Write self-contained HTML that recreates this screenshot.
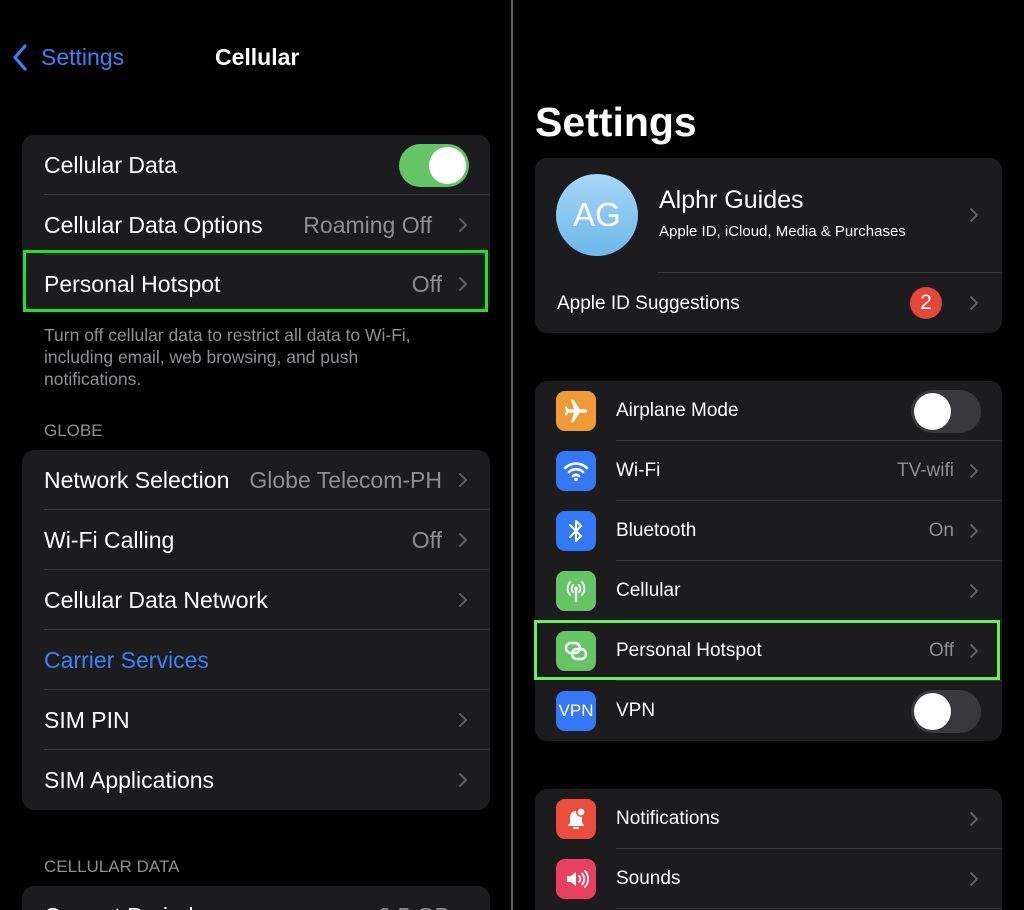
<!DOCTYPE html>
<html><head><meta charset="utf-8"><style>
*{margin:0;padding:0;box-sizing:border-box}
html,body{width:1024px;height:910px;overflow:hidden}
body{background:#000;font-family:"Liberation Sans",sans-serif;color:#fff;position:relative}
.a{position:absolute}
.card{position:absolute;background:#1c1c1e;border-radius:12px;overflow:hidden}
.row{position:absolute;left:0;right:0;height:60px;display:flex;align-items:center}
.sep{position:absolute;height:1px;background:#38383a;right:0}
.val{color:#8e8e93}
.chev{position:absolute;width:10px;height:16px}
.hl{position:absolute;border:3px solid #22e12a}
.hl2{position:absolute;border:3px solid #6cf05a}
.tog{position:absolute;width:70px;height:43px;border-radius:22px;background:#39393d}
.tog i{position:absolute;top:3px;width:37px;height:37px;border-radius:50%;background:#fff}
.ic{position:absolute;left:21px;width:40px;height:40px;border-radius:9px;display:flex;align-items:center;justify-content:center}
.L{font-size:23px}
.R{font-size:19px}
</style></head><body>
<svg width="0" height="0" style="position:absolute"><defs><symbol id="cv" viewBox="0 0 10 16"><polyline points="2,2 8,8 2,14" fill="none" stroke="#5f5f64" stroke-width="2" stroke-linecap="round" stroke-linejoin="round"/></symbol></defs></svg>

<div class="a" style="left:511px;top:0;width:2px;height:910px;background:#5a5a5a"></div>

<!-- LEFT -->
<svg class="a" style="left:12px;top:44px" width="16" height="27" viewBox="0 0 16 27"><polyline points="13,2 3,13.5 13,25" fill="none" stroke="#3a82f7" stroke-width="3.2" stroke-linecap="round" stroke-linejoin="round"/></svg>
<div class="a" style="left:41px;top:44px;font-size:23px;color:#3a82f7">Settings</div>
<div class="a" style="left:215px;top:44px;font-size:23px;font-weight:bold">Cellular</div>

<div class="card" style="left:22px;top:135px;width:468px;height:178px">
  <div class="row L" style="top:0"><span style="margin-left:22px">Cellular Data</span></div>
  <div class="tog" style="left:377px;top:9px;background:#65c466"><i style="left:30px"></i></div>
  <div class="sep" style="left:22px;top:59px"></div>
  <div class="row L" style="top:60px"><span style="margin-left:22px">Cellular Data Options</span><span class="val" style="position:absolute;right:58px">Roaming Off</span></div>
  <svg class="chev" style="left:436px;top:82px"><use href="#cv"/></svg>
  <div class="sep" style="left:22px;top:119px"></div>
  <div class="row L" style="top:119px"><span style="margin-left:22px">Personal Hotspot</span><span class="val" style="position:absolute;right:48px">Off</span></div>
  <svg class="chev" style="left:436px;top:141px"><use href="#cv"/></svg>
</div>
<div class="hl" style="left:23px;top:250px;width:465px;height:62px"></div>

<div class="a" style="left:44px;top:324px;font-size:17.5px;line-height:22px;color:#8e8e93;width:410px">Turn off cellular data to restrict all data to Wi-Fi, including email, web browsing, and push notifications.</div>
<div class="a" style="left:44px;top:421px;font-size:17px;color:#8e8e93">GLOBE</div>

<div class="card" style="left:22px;top:450px;width:468px;height:360px">
  <div class="row L" style="top:0"><span style="margin-left:22px">Network Selection</span><span class="val" style="position:absolute;right:48px">Globe Telecom-PH</span></div>
  <svg class="chev" style="left:436px;top:22px"><use href="#cv"/></svg>
  <div class="sep" style="left:22px;top:59px"></div>
  <div class="row L" style="top:60px"><span style="margin-left:22px">Wi-Fi Calling</span><span class="val" style="position:absolute;right:48px">Off</span></div>
  <svg class="chev" style="left:436px;top:82px"><use href="#cv"/></svg>
  <div class="sep" style="left:22px;top:119px"></div>
  <div class="row L" style="top:120px"><span style="margin-left:22px">Cellular Data Network</span></div>
  <svg class="chev" style="left:436px;top:142px"><use href="#cv"/></svg>
  <div class="sep" style="left:22px;top:179px"></div>
  <div class="row L" style="top:180px"><span style="margin-left:22px;color:#3a82f7">Carrier Services</span></div>
  <div class="sep" style="left:22px;top:239px"></div>
  <div class="row L" style="top:240px"><span style="margin-left:22px">SIM PIN</span></div>
  <svg class="chev" style="left:436px;top:262px"><use href="#cv"/></svg>
  <div class="sep" style="left:22px;top:299px"></div>
  <div class="row L" style="top:300px"><span style="margin-left:22px">SIM Applications</span></div>
  <svg class="chev" style="left:436px;top:322px"><use href="#cv"/></svg>
</div>

<div class="a" style="left:44px;top:857px;font-size:17px;color:#8e8e93">CELLULAR DATA</div>
<div class="card" style="left:22px;top:886px;width:468px;height:60px">
  <div class="row L" style="top:0"><span style="margin-left:22px">Current Period</span><span class="val" style="position:absolute;right:40px">2.5 GB</span></div>
</div>

<!-- RIGHT -->
<div class="a" style="left:535px;top:99px;font-size:41px;font-weight:bold">Settings</div>

<div class="card" style="left:535px;top:158px;width:467px;height:175px">
  <div class="a" style="left:21px;top:16px;width:82px;height:82px;border-radius:50%;background:linear-gradient(#a6d6f5,#6db8ea);display:flex;align-items:center;justify-content:center;font-size:33px">AG</div>
  <div class="a" style="left:124px;top:28px;font-size:25px">Alphr Guides</div>
  <div class="a" style="left:124px;top:65px;font-size:15px">Apple ID, iCloud, Media &amp; Purchases</div>
  <svg class="chev" style="left:434px;top:49px"><use href="#cv"/></svg>
  <div class="sep" style="left:122px;top:114px"></div>
  <div class="a R" style="left:22px;top:135px">Apple ID Suggestions</div>
  <div class="a" style="left:375px;top:129px;width:32px;height:32px;border-radius:50%;background:#e5453a;display:flex;align-items:center;justify-content:center;font-size:21px">2</div>
  <svg class="chev" style="left:434px;top:137px"><use href="#cv"/></svg>
</div>

<div class="card" style="left:535px;top:381px;width:467px;height:360px">
  <div class="ic" style="top:10px;background:#f09a37"><svg width="30" height="30" viewBox="0 0 24 24"><path d="M21 12c0-.8-.7-1.3-1.5-1.3H15L10 3H8l2.5 7.7H6L4.3 8.5H3l1 3.5-1 3.5h1.3L6 13.3h4.5L8 21h2l5-7.7h4.5c.8 0 1.5-.5 1.5-1.3z" fill="#fff"/></svg></div>
  <div class="row R" style="top:0"><span style="margin-left:81px">Airplane Mode</span></div>
  <div class="tog" style="left:376px;top:9px"><i style="left:3px"></i></div>
  <div class="sep" style="left:81px;top:59px"></div>

  <div class="ic" style="top:70px;background:#3478f6"><svg width="28" height="24" viewBox="0 0 28 24"><path d="M3 9a16 16 0 0 1 22 0M7 13a10 10 0 0 1 14 0M11 17a4.5 4.5 0 0 1 6 0" fill="none" stroke="#fff" stroke-width="2.6" stroke-linecap="round"/><circle cx="14" cy="20.5" r="1.8" fill="#fff"/></svg></div>
  <div class="row R" style="top:60px"><span style="margin-left:81px">Wi-Fi</span><span class="val" style="position:absolute;right:48px">TV-wifi</span></div>
  <svg class="chev" style="left:434px;top:82px"><use href="#cv"/></svg>
  <div class="sep" style="left:81px;top:119px"></div>

  <div class="ic" style="top:130px;background:#3478f6"><svg width="20" height="28" viewBox="0 0 20 28"><polyline points="4,8 15,19 10,24 10,4 15,9 4,20" fill="none" stroke="#fff" stroke-width="2" stroke-linejoin="round" stroke-linecap="round"/></svg></div>
  <div class="row R" style="top:120px"><span style="margin-left:81px">Bluetooth</span><span class="val" style="position:absolute;right:48px">On</span></div>
  <svg class="chev" style="left:434px;top:142px"><use href="#cv"/></svg>
  <div class="sep" style="left:81px;top:179px"></div>

  <div class="ic" style="top:190px;background:#65c466"><svg width="30" height="30" viewBox="0 0 30 30"><path d="M9 6a10 10 0 0 0 0 13M21 6a10 10 0 0 1 0 13M12 9a5 5 0 0 0 0 7M18 9a5 5 0 0 1 0 7" fill="none" stroke="#fff" stroke-width="1.8" stroke-linecap="round"/><circle cx="15" cy="12.5" r="2" fill="#fff"/><line x1="15" y1="13" x2="15" y2="25" stroke="#fff" stroke-width="2.2" stroke-linecap="round"/></svg></div>
  <div class="row R" style="top:180px"><span style="margin-left:81px">Cellular</span></div>
  <svg class="chev" style="left:434px;top:202px"><use href="#cv"/></svg>
  <div class="sep" style="left:81px;top:239px"></div>

  <div class="ic" style="top:250px;background:#65c466"><svg width="28" height="28" viewBox="0 0 28 28"><rect x="4" y="6" width="14" height="10" rx="5" fill="none" stroke="#fff" stroke-width="2.4"/><rect x="10" y="12" width="14" height="10" rx="5" fill="none" stroke="#fff" stroke-width="2.4"/></svg></div>
  <div class="row R" style="top:240px"><span style="margin-left:81px">Personal Hotspot</span><span class="val" style="position:absolute;right:48px">Off</span></div>
  <svg class="chev" style="left:434px;top:262px"><use href="#cv"/></svg>
  <div class="sep" style="left:81px;top:299px"></div>

  <div class="ic" style="top:310px;background:#3478f6;font-size:17px">VPN</div>
  <div class="row R" style="top:300px"><span style="margin-left:81px">VPN</span></div>
  <div class="tog" style="left:376px;top:309px"><i style="left:3px"></i></div>
</div>
<div class="hl2" style="left:534px;top:620px;width:466px;height:60px"></div>

<div class="card" style="left:535px;top:789px;width:467px;height:160px">
  <div class="ic" style="top:10px;background:#eb4d3d"><svg width="28" height="28" viewBox="0 0 28 28"><path d="M14 6c-4 0-6 3-6 7v5l-2 2v1h16v-1l-2-2v-5c0-4-2-7-6-7z" fill="#fff"/><rect x="11" y="22" width="6" height="2" rx="1" fill="#fff"/><circle cx="19" cy="7" r="4.2" fill="#fff" stroke="#eb4d3d" stroke-width="1.6"/></svg></div>
  <div class="row R" style="top:0"><span style="margin-left:81px">Notifications</span></div>
  <svg class="chev" style="left:434px;top:22px"><use href="#cv"/></svg>
  <div class="sep" style="left:81px;top:59px"></div>
  <div class="ic" style="top:70px;background:#e8415f"><svg width="28" height="28" viewBox="0 0 28 28"><path d="M5 11h4l5-4v14l-5-4H5z" fill="#fff"/><path d="M17 11a4 4 0 0 1 0 6M20 8.5a8 8 0 0 1 0 11M23 6a12 12 0 0 1 0 16" fill="none" stroke="#fff" stroke-width="1.8" stroke-linecap="round"/></svg></div>
  <div class="row R" style="top:60px"><span style="margin-left:81px">Sounds</span></div>
  <svg class="chev" style="left:434px;top:82px"><use href="#cv"/></svg>
  <div class="sep" style="left:81px;top:119px"></div>
</div>
</body></html>
